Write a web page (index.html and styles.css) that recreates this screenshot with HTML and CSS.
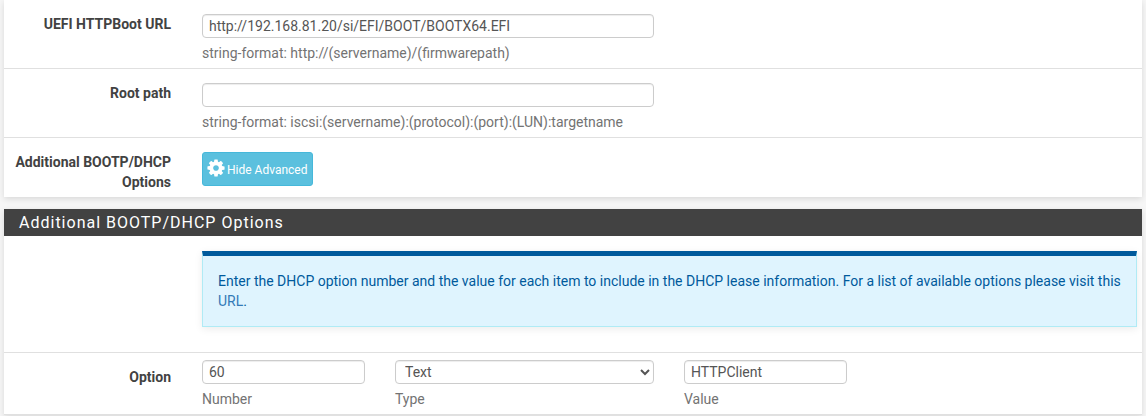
FILE: index.html
```html
<!DOCTYPE html>
<html lang="en">
<head>
  <meta charset="UTF-8" />
  <title>DHCP Server</title>
  <link rel="stylesheet" href="styles.css">
</head>
<body>

  <div class="panel first-panel">
    <div class="form-row">
      <span class="row-label">UEFI HTTPBoot URL</span>
      <div class="row-body">
        <input class="form-control" type="text" value="http://192.168.81.20/si/EFI/BOOT/BOOTX64.EFI">
        <span class="help-text">string-format: http://(servername)/(firmwarepath)</span>
      </div>
    </div>

    <div class="form-row">
      <span class="row-label">Root path</span>
      <div class="row-body">
        <input class="form-control" type="text" value="">
        <span class="help-text">string-format: iscsi:(servername):(protocol):(port):(LUN):targetname</span>
      </div>
    </div>

    <div class="form-row button-row">
      <span class="row-label">Additional BOOTP/DHCP Options</span>
      <div class="row-body">
        <button class="btn-info" type="button">
          <svg class="cog" viewBox="0 0 1792 1792"><path fill="currentColor" d="M1152 896q0-106-75-181t-181-75-181 75-75 181 75 181 181 75 181-75 75-181zm512-109v222q0 12-8 23t-20 13l-185 28q-19 54-39 91 35 50 107 138 10 12 10 25t-9 23q-27 37-99 108t-94 71q-12 0-26-9l-138-108q-44 23-91 38-16 136-29 186-7 28-36 28h-222q-14 0-24.5-8.5t-11.5-21.5l-28-184q-49-16-90-37l-141 107q-10 9-25 9-14 0-25-11-126-114-165-168-7-10-7-23 0-12 8-23 15-21 51-66.5t54-70.5q-27-50-41-99l-183-27q-13-2-21-12.5t-8-23.5v-222q0-12 8-23t19-13l186-28q14-46 39-92-40-57-107-138-10-12-10-24 0-10 9-23 26-36 98.5-107.5t94.5-71.5q13 0 26 10l138 107q44-23 91-38 16-136 29-186 7-28 36-28h222q14 0 24.5 8.5t11.5 21.5l28 184q49 16 90 37l142-107q9-9 24-9 13 0 25 10 129 119 165 170 7 8 7 22 0 12-8 23-15 21-51 66.5t-54 70.5q26 50 41 98l183 28q13 2 21 12.5t8 23.5z"/></svg>
          <span class="btn-text">Hide Advanced</span>
        </button>
      </div>
    </div>
  </div>

  <div class="panel">
    <h2 class="panel-heading">Additional BOOTP/DHCP Options</h2>

    <div class="form-row alert-row">
      <span class="row-label"></span>
      <div class="row-body">
        <div class="alert">Enter the DHCP option number and the value for each item to include in the DHCP lease information. For a list of available options please visit this <a href="#">URL</a>.</div>
      </div>
    </div>

    <div class="form-row option-row">
      <span class="row-label">Option</span>
      <div class="option-fields">
        <div class="field narrow">
          <input class="form-control" type="text" value="60">
          <span class="help-text">Number</span>
        </div>
        <div class="field wide">
          <select class="form-control">
            <option>Text</option>
          </select>
          <span class="help-text">Type</span>
        </div>
        <div class="field narrow">
          <input class="form-control" type="text" value="HTTPClient">
          <span class="help-text">Value</span>
        </div>
      </div>
    </div>
  </div>

</body>
</html>
```

FILE: styles.css
```css
html, body {
  height: 100%;
  overflow: hidden;
}

body {
  margin: 0;
  padding: 0 4px;
  font-family: Roboto, sans-serif;
  font-size: 14px;
  line-height: 20px;
  background: #f6f6f6;
  color: #424242;
}

.panel {
  background: #fff;
  box-shadow: 0 2px 6px rgba(0,0,0,0.12);
}

.first-panel {
  margin-bottom: 12px;
}

.panel-heading {
  margin: 0;
  height: 27px;
  padding-left: 15px;
  background: #424242;
  color: #fff;
  font-size: 16px;
  font-weight: 400;
  line-height: 27px;
  letter-spacing: 1px;
}

.form-row {
  display: flex;
  height: 68px;
  border-bottom: 1px solid #e0e0e0;
}

.button-row {
  height: 59px;
  border-bottom: none;
}

.alert-row {
  height: 116px;
}

.option-row {
  height: 61px;
}

.row-label {
  width: 167px;
  margin-right: 31px;
  padding-top: 14px;
  flex: none;
  text-align: right;
  font-weight: 700;
  line-height: 20px;
}

.row-body {
  flex: 1;
  padding: 14px 5px 0 0;
}

.form-control {
  display: block;
  box-sizing: border-box;
  width: 452px;
  height: 24px;
  padding: 0 6px;
  border: 1px solid #ccc;
  border-radius: 4px;
  background: #fff;
  color: #555;
  font-family: Roboto, sans-serif;
  font-size: 14px;
  box-shadow: inset 0 1px 1px rgba(0,0,0,0.075);
}

select.form-control {
  padding-left: 5px;
}

.help-text {
  display: block;
  margin-top: 5px;
  color: #737373;
  font-size: 14px;
  line-height: 20px;
}

.btn-info {
  display: flex;
  align-items: center;
  gap: 2px;
  width: 111px;
  height: 34px;
  padding: 0 0 0 3px;
  border: 1px solid #46b8da;
  border-radius: 3px;
  background: #5bc0de;
  color: #fff;
  font-family: Roboto, sans-serif;
  font-size: 12px;
  white-space: nowrap;
}

.cog {
  width: 20px;
  height: 20px;
  margin-top: -3px;
}

.btn-text {
  margin-top: 2px;
  margin-left: -1px;
}

.alert-row .row-body {
  padding-top: 15px;
}

.alert {
  box-sizing: border-box;
  height: 76px;
  padding: 15px 15px 0;
  border: 1px solid #b0ebf5;
  border-top: 5px solid #005a9c;
  background: #dff4fe;
  color: #005a9c;
  box-shadow: 0 2px 8px rgba(0,0,0,0.08);
}

.alert a {
  color: #337ab7;
  text-decoration: none;
}

.option-fields {
  display: flex;
  gap: 30px;
  padding-top: 7px;
}

.field.narrow .form-control {
  width: 163px;
}

.field.wide .form-control {
  width: 259px;
}
```
